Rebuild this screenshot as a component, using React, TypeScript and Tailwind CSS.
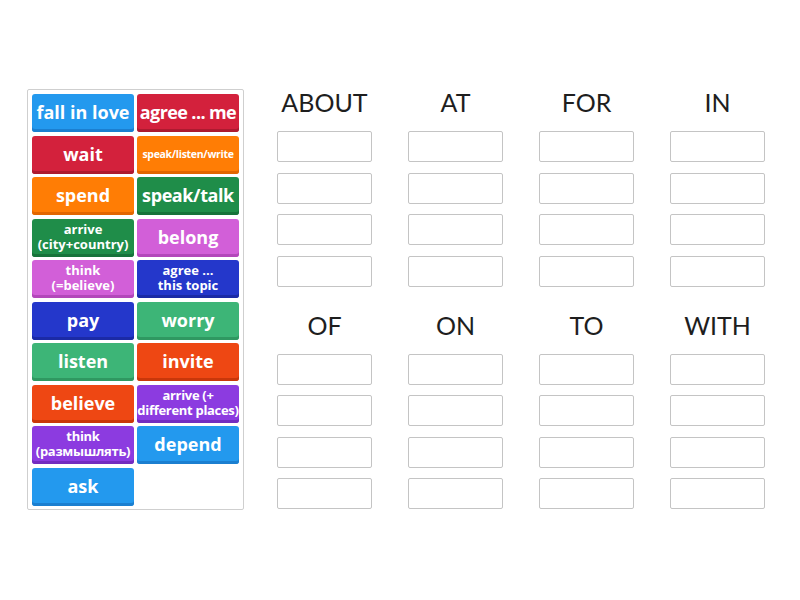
import React from 'react';

type Tile = { label: string; color: string; size: 'lg' | 'md' | 'sm'; extra?: string };

const blue = 'bg-[#2399ee] shadow-[inset_0_-3px_0_#1b7fd0]';
const red = 'bg-[#d3213c] shadow-[inset_0_-3px_0_#ad1a30]';
const orange = 'bg-[#ff7d05] shadow-[inset_0_-3px_0_#e26600]';
const green = 'bg-[#1f8d49] shadow-[inset_0_-3px_0_#17733a]';
const magenta = 'bg-[#d25fd8] shadow-[inset_0_-3px_0_#b347ba]';
const navy = 'bg-[#2437cb] shadow-[inset_0_-3px_0_#1b2aa6]';
const mint = 'bg-[#3db577] shadow-[inset_0_-3px_0_#2f9861]';
const tomato = 'bg-[#ee4713] shadow-[inset_0_-3px_0_#c9370a]';
const purple = 'bg-[#8c3be0] shadow-[inset_0_-3px_0_#722cc0]';

const tiles: Tile[] = [
    { label: 'fall in love', color: blue, size: 'lg' },
    { label: 'agree ... me', color: red, size: 'lg', extra: 'text-[17px] tracking-[-0.6px]' },
    { label: 'wait', color: red, size: 'lg' },
    { label: 'speak/listen/write', color: orange, size: 'sm' },
    { label: 'spend', color: orange, size: 'lg' },
    { label: 'speak/talk', color: green, size: 'lg', extra: 'tracking-[-0.4px]' },
    { label: 'arrive\n(city+country)', color: green, size: 'md' },
    { label: 'belong', color: magenta, size: 'lg' },
    { label: 'think\n(=believe)', color: magenta, size: 'md' },
    { label: 'agree ...\nthis topic', color: navy, size: 'md' },
    { label: 'pay', color: navy, size: 'lg' },
    { label: 'worry', color: mint, size: 'lg' },
    { label: 'listen', color: mint, size: 'lg' },
    { label: 'invite', color: tomato, size: 'lg' },
    { label: 'believe', color: tomato, size: 'lg' },
    { label: 'arrive (+\ndifferent places)', color: purple, size: 'md', extra: 'text-[12px] tracking-[-0.3px]' },
    { label: 'think\n(размышлять)', color: purple, size: 'md', extra: 'tracking-[-0.3px]' },
    { label: 'depend', color: blue, size: 'lg' },
    { label: 'ask', color: blue, size: 'lg' },
];

const sizeClass = {
    lg: 'text-[18px] leading-[22px]',
    md: 'text-[13px] leading-[15px]',
    sm: 'text-[10.5px] leading-[14px] tracking-[-0.3px]',
};

const groupsTop = ['ABOUT', 'AT', 'FOR', 'IN'];
const groupsBottom = ['OF', 'ON', 'TO', 'WITH'];

const DropGroup = ({ title }: { title: string }) => (
    <div className="flex w-[95px] flex-col">
        <div className="h-[30px] text-center text-[25px] font-normal leading-[30px] text-[#1e1e1e] font-['Lato',sans-serif]">{title}</div>
        <div className="mt-[14px] flex flex-col gap-[10.5px]">
            {[0, 1, 2, 3].map((i) => (
                <div key={i} className="h-[31px] rounded-[2px] border border-[#c4c4c4] bg-white" />
            ))}
        </div>
    </div>
);

const App = () => {
    return (
        <div className="flex h-[600px] w-[800px] items-start bg-white pt-[87px] font-['Open_Sans',sans-serif]">
            <div className="ml-[27px] mt-[2px] w-[217px] rounded-[2px] border border-[#cfcfcf] px-[4px] pb-[3px] pt-[4px]">
                <div className="grid grid-cols-2 gap-x-[3px] gap-y-[3.5px]">
                    {tiles.map((tile, index) => (
                        <div
                            key={index}
                            className={`flex h-[38px] items-center justify-center whitespace-pre rounded-[3px] pb-[2px] text-center font-bold text-white ${tile.color} ${sizeClass[tile.size]} ${tile.extra ?? ''}`}
                        >
                            {tile.label}
                        </div>
                    ))}
                </div>
            </div>
            <div className="ml-[33px] flex flex-col">
                <div className="flex gap-[36px]">
                    {groupsTop.map((g) => (
                        <DropGroup key={g} title={g} />
                    ))}
                </div>
                <div className="mt-[23px] flex gap-[36px]">
                    {groupsBottom.map((g) => (
                        <DropGroup key={g} title={g} />
                    ))}
                </div>
            </div>
        </div>
    );
};

export default App;
